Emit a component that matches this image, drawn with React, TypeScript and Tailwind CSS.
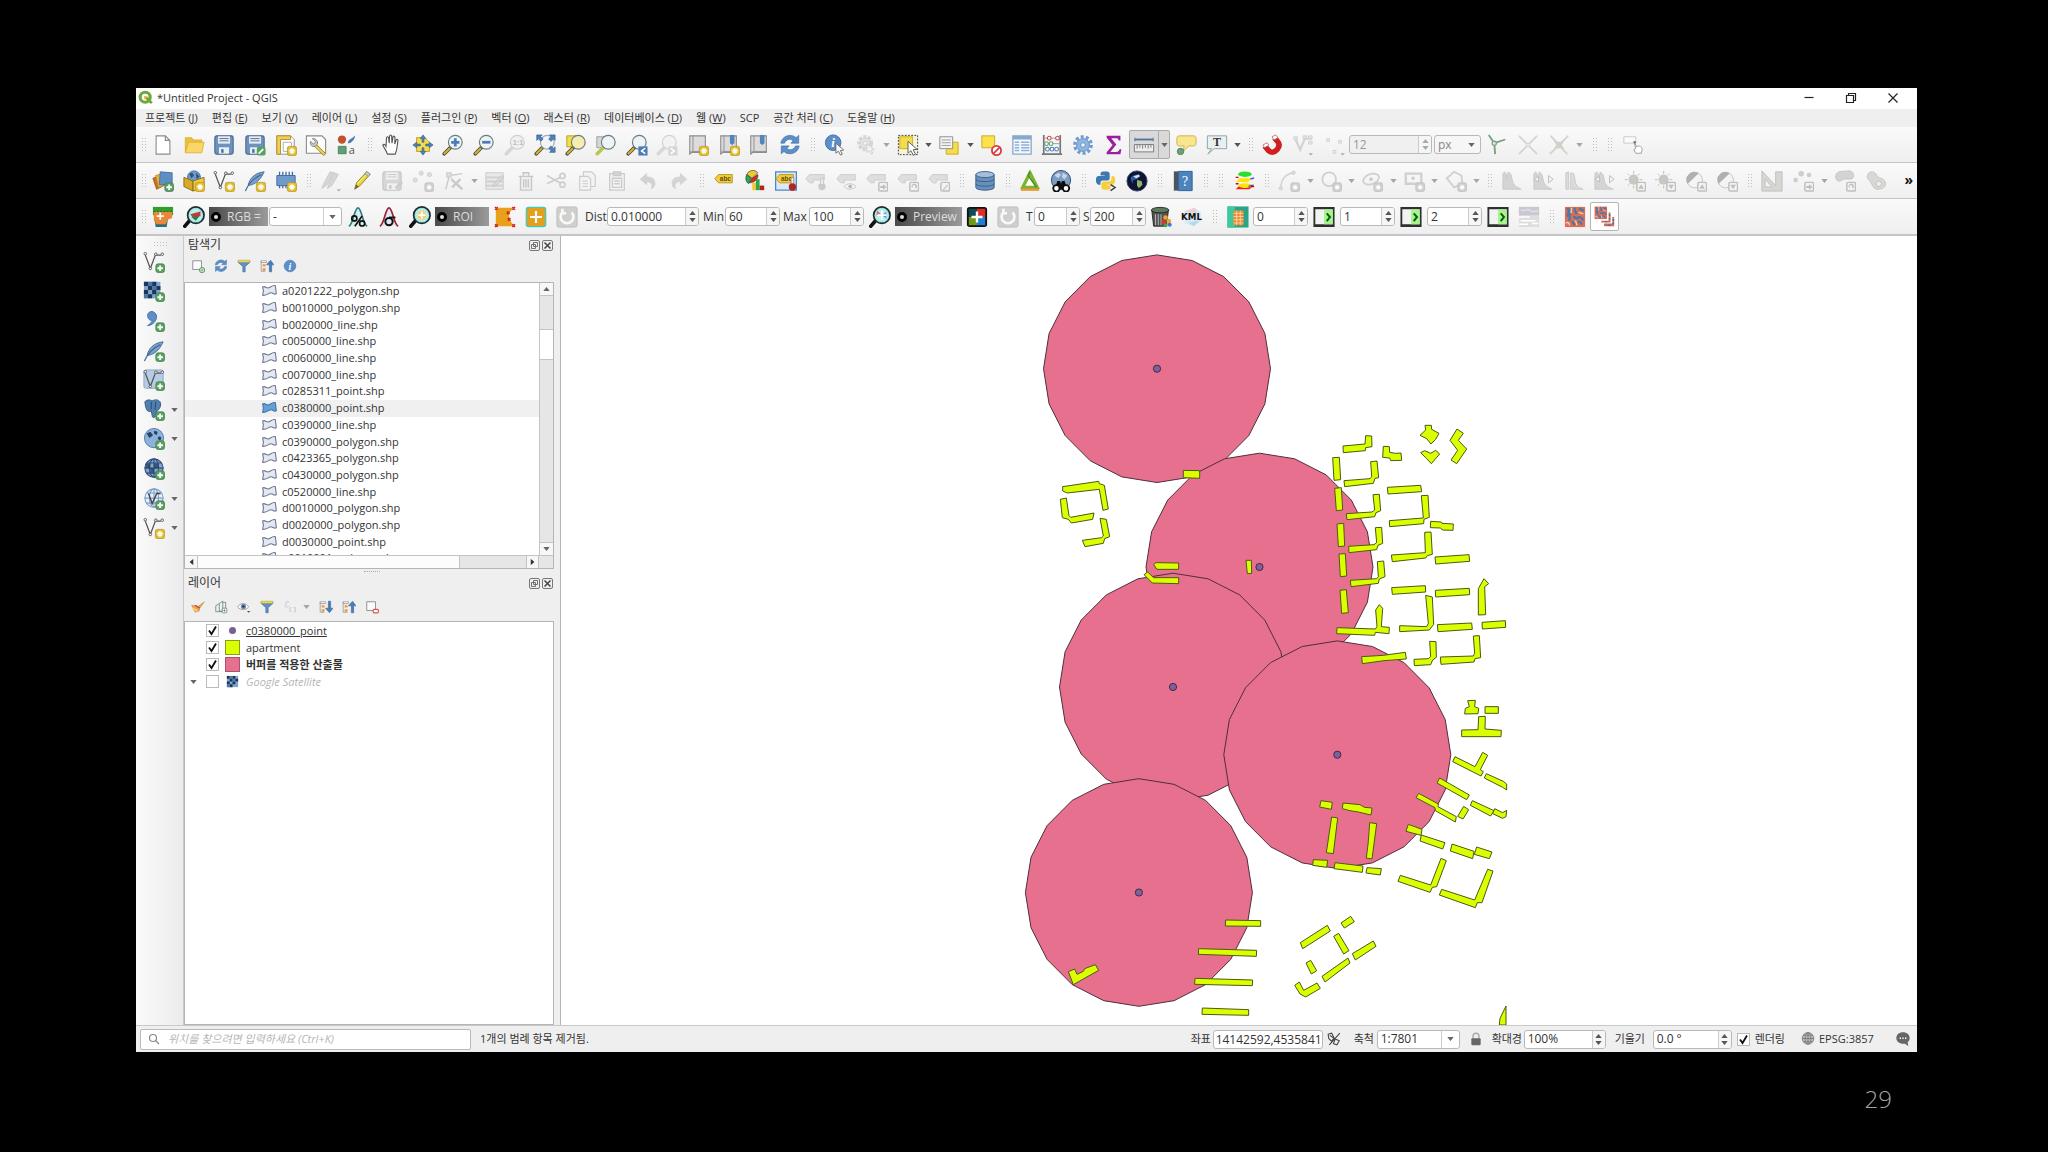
import { useState } from "react";
import type { ReactNode } from "react";
import clsx from "clsx";

/* ---------- badges shared by several icons ---------- */

const plusBadge = (
  <g>
    <rect x="14" y="14" width="9.5" height="9.5" rx="2.5" fill="#57a05f" stroke="#3f7f48" strokeWidth=".8" />
    <path d="M18.7 15.8v6M15.7 18.8h6" stroke="#fff" strokeWidth="2" />
  </g>
);

const newBadge = (
  <g>
    <rect x="13.5" y="13.5" width="10" height="10" rx="2" fill="#e3bd2c" stroke="#b8951b" strokeWidth=".8" />
    <path d="M18.5 15v7M15 18.5h7M16.2 16.2l4.6 4.6M20.8 16.2l-4.6 4.6" stroke="#fff" strokeWidth="1.3" />
  </g>
);

const greyBadge = (
  <g>
    <rect x="14" y="14" width="9.5" height="9.5" rx="2" fill="#d0d0d0" stroke="#bcbcbc" strokeWidth=".8" />
    <path d="M18.7 16v5.5M16 18.8h5.5M17 17l3.5 3.5M20.5 17L17 20.5" stroke="#fff" strokeWidth="1.1" />
  </g>
);

const lens = (stroke: string, handle: string, fill = "#eef3f4") => (
  <g>
    <path d="M9.5 14.5L2.5 21.5" stroke={handle === "#d4b12a" ? "#444" : handle} strokeWidth="4" strokeLinecap="round" />
    <path d="M8 16L2.8 21.2" stroke={handle} strokeWidth="2.4" strokeLinecap="round" />
    <circle cx="14.5" cy="9" r="7.5" fill={fill} stroke={stroke} strokeWidth="1.3" />
  </g>
);

const vNodes = (
  <g fill="none" stroke="#555" strokeWidth="1.4">
    <path d="M2.5 4.5L8 19l5.5-14.5h6" />
    <circle cx="2.5" cy="3" r="1.4" fill="#fff" strokeWidth="1" />
    <circle cx="8" cy="19" r="1.4" fill="#fff" strokeWidth="1" />
    <circle cx="14" cy="3.5" r="1.4" fill="#fff" strokeWidth="1" />
    <circle cx="21" cy="3.5" r="1.4" fill="#fff" strokeWidth="1" />
  </g>
);

const floppy = (body: string, line: string, label: string) => (
  <g>
    <rect x="2" y="2" width="20" height="20" rx="2" fill={body} stroke={line} strokeWidth="1.2" />
    <path d="M5.5 2.5h13v8h-13z" fill={label} />
    <path d="M7 5h10M7 7.5h10" stroke={line} />
    <path d="M6.5 14.5h11v7h-11z" fill={label} />
    <path d="M9 16.5h2.5v4H9z" fill={line} />
  </g>
);

const feather = (
  <g>
    <path d="M22 2C12 3 6 9 4.5 17c7-1 13-5 17.5-15z" fill="#7ba2cf" stroke="#456c96" />
    <path d="M1.5 23C4 17 10 9 19 5" fill="none" stroke="#456c96" strokeWidth="1.3" />
  </g>
);

const globe = (fill: string, line: string) => (
  <g fill="none" stroke={line} strokeWidth="1.2">
    <circle cx="12" cy="11" r="10" fill={fill} />
    <path d="M2 11h20M4 5.5h16M4 16.5h16" />
    <ellipse cx="12" cy="11" rx="5" ry="10" />
    <path d="M12 1v20" />
  </g>
);

const checker = (
  <g>
    <path d="M1 2h18v18H1z" fill="#7fa4cf" />
    <path d="M1 2h4.500v4.500H1zM10 2h4.500v4.500H10zM5.500 6.500H10V11H5.500zM14.500 6.500H19V11h-4.500zM1 11h4.500v4.500H1zM10 11h4.500v4.500H10zM5.500 15.500H10V20H5.500z" fill="#1e3554" />
    <path d="M5.500 2H10v4.500H5.500zM10 6.500h4.500V11H10zM1 15.500h4.500V20H1z" fill="#4a77aa" />
  </g>
);

const book = (
  <g>
    <path d="M3 2h17v18H5.500L3 22z" fill="#dcdcdc" stroke="#8d8d8d" strokeWidth="1.2" />
    <path d="M6.500 2v17M3 20l3-1h14" fill="none" stroke="#8d8d8d" />
  </g>
);

const tag = (fill: string, line: string, textColor: string) => (
  <g>
    <path d="M1 9.500l4-4.500h15v9H5z" fill={fill} stroke={line} />
    <text x="6.500" y="12" fontSize="7" fontWeight="700" fontFamily="Liberation Sans, sans-serif" fill={textColor}>abc</text>
  </g>
);

const tagGrey = <path d="M1 9.500l4-4.500h16v6H9v3H5z" fill="#dedede" stroke="#cbcbcb" />;

const histogram = (
  <path d="M2 21V4l2-2 2 3v5l2-8 3 3 2 9 3 4 6 3z" fill="#d4d4d2" stroke="#c4c4c2" strokeWidth=".8" />
);

const sun = (
  <g>
    <path d="M10.500 1v3M10.500 17v3M1 10.500h3M4 4l2 2M17 4l-2 2M4 17l2-2M17 10.500h3" stroke="#bcbcb6" />
    <circle cx="10.500" cy="10.500" r="5.500" fill="#c8c8c2" />
  </g>
);

const contrast = (
  <g>
    <circle cx="10.500" cy="11" r="8.500" fill="#f4f4f4" stroke="#c3c3c3" />
    <path d="M3 15A8.500 8.500 0 0115 3.500z" fill="#b0b0b0" />
  </g>
);

const levelBadge = (path: string) => (
  <g>
    <rect x="14" y="13.500" width="9.500" height="9.500" rx="1.500" fill="#f2f2f2" stroke="#bfbfbf" strokeWidth="1.600" />
    <path d={path} fill="#bfbfbf" />
  </g>
);

const magnifierDark = (inner: ReactNode) => (
  <g>
    <path d="M8 15L2 22" stroke="#111" strokeWidth="4" strokeLinecap="round" />
    <circle cx="14" cy="10" r="9" fill="#8fe0e0" stroke="#1c2b2b" strokeWidth="1.800" />
    <circle cx="14" cy="10" r="7" fill="#bdeee8" />
    {inner}
  </g>
);

const cycleArrows = (
  <g fill="#5b8fc7" stroke="#3c6ea5" strokeWidth=".7">
    <path d="M2 10C3 4 8 1.500 12 1.500c3 0 5 1 6.500 2.500L21.500 1.500V10H13l2.500-2.700C12 4.500 7.500 6 6 10z" />
    <path d="M22 13c-1 6-6 8.500-10 8.500-3 0-5-1-6.500-2.500L2.500 21.500V13H11l-2.500 2.700C12 18.500 16.500 17 18 13z" />
  </g>
);

const runBox = (
  <g>
    <path d="M1.500 2h21v20h-21z" fill="#f1f3f1" stroke="#2e302e" strokeWidth="2" />
    <path d="M1 1.500h22v2H1zM1 20h22v2.500H1z" fill="#2e302e" />
    <path d="M12 4h9.500v16H12z" fill="#a5f58c" />
    <path d="M15 8l3.500 4-3.500 4.500" fill="none" stroke="#0c5c10" strokeWidth="2.200" />
  </g>
);

const mosaic = (
  <g>
    <path d="M1 1h22v22H1z" fill="#dd6d54" />
    <path d="M3 4c3-2 4 1 2 3s2 3 3 1M12 2c-2 3 2 4 1 7M17 2c0 3 4 1 4 4M3 11c4-2 4 3 2 5M10 12c3-1 3 3 5 1s5 0 6 3M8 17c2 0 2 3 4 4M15 18c2-2 3 1 5 2" fill="none" stroke="#4a78a8" strokeWidth="2.600" />
    <path d="M8 2c1 2-1 3 0 6M16 7c2 0 3 2 5 1M2 19c2-2 4-1 4 2M12 16c2 1 1 3 2 5" fill="none" stroke="#ecd9bd" strokeWidth="1.300" />
  </g>
);

const treeBars = (
  <g>
    <path d="M2 3v18h7" fill="none" stroke="#777" />
    <path d="M2 3h9v3H2z" fill="#fff" stroke="#777" />
    <path d="M4.500 9h5v4h-5zM4.500 16h5v4h-5z" fill="#ea9a3e" />
  </g>
);

const filePath =
  "M2.500 6c3-2 5 1.500 8 1.500s6-5 11-3.500l1.500 12c-3 2.500-5-1.500-8-1.500-3.500 0-4.500 4.500-12.500 4 1.500-4.500 1.500-8.500 0-12.500z";

const icons: Record<string, ReactNode> = {
  qgis: (
    <g>
      <circle cx="11.500" cy="11.500" r="8" fill="none" stroke="#6fa83a" strokeWidth="5" />
      <path d="M13 12l9 9" stroke="#6fa83a" strokeWidth="4.500" />
      <path d="M9.500 9.500l6 1-5 5z" fill="#eaa93c" />
    </g>
  ),
  newFile: <path d="M4.500 2h10l5 5v15h-15zM14.500 2v5h5" fill="#fff" stroke="#8a8a8a" strokeWidth="1.200" />,
  open: (
    <g stroke="#dcae2b" strokeWidth=".9">
      <path d="M2.500 20V4h7l2 2.500h9V11" fill="#edbf3f" />
      <path d="M2.500 20.500L6 9h17l-2.500 11.500z" fill="#f8d668" />
    </g>
  ),
  save: floppy("#6d92bd", "#476a93", "#e9eef4"),
  saveAs: (
    <g>
      {floppy("#6d92bd", "#476a93", "#e9eef4")}
      <rect x="14" y="14" width="9.500" height="9.500" rx="2" fill="#57a05f" />
      <path d="M16 21.500l5-5" stroke="#fff" strokeWidth="2" />
    </g>
  ),
  newLayout: (
    <g>
      <path d="M2 2h15l4 4v16H2z" fill="#fff" stroke="#8a8a8a" />
      <path d="M2 2h15v4H6v16H2z" fill="#efcf55" stroke="#b58f20" />
      <path d="M9 9h9v10H9z" fill="#fff" stroke="#aaa" />
      {newBadge}
    </g>
  ),
  layouts: (
    <g>
      <path d="M1.500 2h17l4 4v15h-21z" fill="#fdfdfd" stroke="#8a8a8a" strokeWidth="1.200" />
      <path d="M12 13l8.500 8.500" stroke="#9a8128" strokeWidth="3.600" strokeLinecap="round" />
      <path d="M12 13l8.500 8.500" stroke="#ecd05a" strokeWidth="2.200" strokeLinecap="round" />
      <path d="M8 5l3.500 3.500L9.500 11 6 8c-1 4 2 6.500 5 5.500l2.500-2.500C14.500 8 12 4.500 8 5z" fill="#c9c9c9" stroke="#777" strokeWidth=".9" />
    </g>
  ),
  styles: (
    <g>
      <circle cx="6.500" cy="6" r="4.500" fill="#c4502c" />
      <path d="M2.500 13.500h8.500v8H2.500z" fill="#5f9f76" stroke="#47805b" />
      <path d="M13 10c0-4 3-4 8-8.500-1 5-4 8.500-8 8.500z" fill="#4c7db5" />
      <text x="14" y="22" fontSize="12" fontFamily="Open Sans, sans-serif" fill="#555">a</text>
    </g>
  ),
  hand: (
    <path
      d="M7 22c-1-4-4-7-5-10 1-1.500 2.500-.5 3.500 1.500L6 4.500c0-2 2-2 2.300 0L9 10l.3-7.500c.2-1.800 2.200-1.800 2.300 0L12 10l1-6.500c.4-1.700 2.200-1.400 2.200.3L15 11l1.500-4.500c.6-1.400 2.200-.9 2 .7C17.500 13 18 16 15.500 22z"
      fill="#fff" stroke="#555" strokeWidth="1.200"
    />
  ),
  panSelection: (
    <g>
      <path d="M5 4h9l5 5v10H5z" fill="#f5dc48" stroke="#b59b22" />
      <path d="M12 1l3 4h-2v4h-2V5H9zM12 23l3-4h-2v-4h-2v4H9zM1 12l4-3v2h4v2H5v2zM23 12l-4-3v2h-4v2h4v2z" fill="#4f82bb" stroke="#33618f" strokeWidth=".7" />
    </g>
  ),
  zoomIn: <g>{lens("#6b7b86", "#d4b12a")}<path d="M14.500 4.500v9M10 9h9" stroke="#4a7db5" strokeWidth="3" /></g>,
  zoomOut: <g>{lens("#6b7b86", "#d4b12a")}<path d="M10 9h9" stroke="#4a7db5" strokeWidth="3" /></g>,
  zoomNative: (
    <g>
      {lens("#cfcfcf", "#d6d6d6", "#f0f0f0")}
      <text x="9.500" y="12" fontSize="8" fontWeight="700" fontFamily="Liberation Sans, sans-serif" fill="#bdbdbd">1:1</text>
    </g>
  ),
  zoomFull: (
    <g>
      {lens("#aaa", "#d4b12a", "#f2f5f8")}
      <path d="M3 1h6L7.300 2.700 10 5.400 7.400 8 4.700 5.300 3 7zM23 1v6l-1.700-1.700L18.600 8 16 5.400l2.700-2.700L17 1zM23 20h-6l1.700-1.700L16 15.600l2.600-2.600 2.700 2.700L23 14z" fill="#4f82bb" stroke="#2d5a8a" strokeWidth=".7" />
    </g>
  ),
  zoomSelection: <g><path d="M2 2h12v12H2z" fill="#f5dc48" stroke="#b59b22" />{lens("#6b7b86", "#d4b12a", "#f4ecb0")}</g>,
  zoomLayer: <g><path d="M2 3h12v12H2z" fill="#d8d8d8" stroke="#999" />{lens("#6b7b86", "#b9c94a")}</g>,
  zoomLast: (
    <g>
      {lens("#6b7b86", "#d4b12a")}
      <path d="M13.500 13.500h10v10h-10z" fill="#4a7db5" />
      <path d="M21 15.500l-4 3 4 3" fill="none" stroke="#fff" strokeWidth="1.600" />
    </g>
  ),
  zoomNext: (
    <g>
      {lens("#d2d2d2", "#d8d8d8", "#f3f3f3")}
      <path d="M13.500 13.500h10v10h-10z" fill="#d6d6d6" />
      <path d="M16 15.500l4 3-4 3" fill="none" stroke="#fff" strokeWidth="1.600" />
    </g>
  ),
  bookNew: <g>{book}{newBadge}</g>,
  bookmarkNew: <g>{book}<path d="M13 1h5v9l-2.500 2L13 10z" fill="#5385bd" />{newBadge}</g>,
  bookmark: <g>{book}<path d="M13 1h5v9l-2.500 2L13 10z" fill="#5385bd" /></g>,
  refresh: cycleArrows,
  identify: (
    <g>
      <circle cx="10" cy="9.500" r="8.500" fill="#5c8fc8" stroke="#3f6ea3" />
      <text x="7.800" y="14.500" fontSize="14" fontStyle="italic" fontWeight="700" fontFamily="Liberation Serif, serif" fill="#fff">i</text>
      <path d="M13 10v11l2.700-2.300L18 23l2-1-2.200-4 3.700-.5z" fill="#fff" stroke="#666" />
    </g>
  ),
  gearGrey: (
    <g>
      <circle cx="11" cy="10" r="7" fill="none" stroke="#d6d6d6" strokeWidth="3.500" strokeDasharray="3.500 1.500" />
      <circle cx="11" cy="10" r="5.500" fill="#e4e4e4" stroke="#cdcdcd" />
      <circle cx="11" cy="10" r="2.200" fill="#f6f6f6" stroke="#cdcdcd" />
      <path d="M13 11v9l2.500-2 2 4 2-1-2-3.500 3.500-.5z" fill="#f5f5f5" stroke="#cdcdcd" />
    </g>
  ),
  select: (
    <g>
      <path d="M1.500 1.500h21v21h-21z" fill="#f5f3dc" stroke="#333" strokeDasharray="2 1.500" />
      <path d="M3 3h14v13H3z" fill="#f5dc48" stroke="#c9ab22" />
      <path d="M12 8v13l3.200-2.800 2.600 5 2.400-1.200-2.600-4.800 4.400-.4z" fill="#fff" stroke="#555" />
    </g>
  ),
  selectForm: (
    <g>
      <path d="M9 9h13v13H9z" fill="#f5dc48" stroke="#c9a822" />
      <path d="M2 3h14v13H2z" fill="#f2f4f6" stroke="#888" />
      <path d="M4 6.500h10M4 9.500h10M4 12.500h10" stroke="#999" />
    </g>
  ),
  deselect: (
    <g>
      <path d="M2 2h14v13H2z" fill="#fbe24c" stroke="#c9a822" />
      <circle cx="18" cy="18" r="5" fill="#fff" stroke="#d93d3d" strokeWidth="2" />
      <path d="M14.500 21.500l7-7" stroke="#d93d3d" strokeWidth="2" />
    </g>
  ),
  table: (
    <g>
      <path d="M2 2h20v20H2z" fill="#f4f8fc" stroke="#86a9cd" strokeWidth="1.400" />
      <path d="M2 2h20v4H2z" fill="#86a9cd" />
      <path d="M4 9h5M4 12h5M4 15h5M4 18h5M11 9h9M11 12h9M11 15h9M11 18h9" stroke="#8fb0d3" strokeWidth="1.600" />
    </g>
  ),
  abacus: (
    <g>
      <path d="M3 1v21M21 1v21M1 22h22" stroke="#777" strokeWidth="1.800" />
      <path d="M3 4.500h18M3 10.500h18M3 16.500h18" stroke="#999" />
      <g strokeWidth="1.200" fill="#fff">
        <g stroke="#c74b4b"><circle cx="9" cy="4.500" r="2" /><circle cx="18" cy="4.500" r="2" /></g>
        <g stroke="#5aa16b"><circle cx="6" cy="10.500" r="2" /><circle cx="11" cy="10.500" r="2" /></g>
        <g stroke="#4f82bb"><circle cx="7" cy="16.500" r="2" /><circle cx="12" cy="16.500" r="2" /><circle cx="17" cy="16.500" r="2" /></g>
      </g>
    </g>
  ),
  gear: (
    <g>
      <circle cx="12" cy="12" r="9" fill="none" stroke="#6f9bd0" strokeWidth="3.500" strokeDasharray="3.300 2.355" />
      <circle cx="12" cy="12" r="7" fill="#8fb5e2" stroke="#5f8dc4" />
      <circle cx="12" cy="12" r="2.500" fill="#f6f6f6" stroke="#5f8dc4" />
    </g>
  ),
  sigma: <path d="M4 2h15v5h-2c0-2-1-2.500-3-2.500H9l5.500 7L8 19.500h6.500c2 0 3-1 3.500-3h2L19 22H4v-2l6.500-8L4 4z" fill="#9a1f9c" />,
  measure: (
    <g>
      <path d="M2 6h20" stroke="#4f739c" strokeWidth="2" />
      <path d="M2 4v4M22 4v4" stroke="#4f739c" />
      <path d="M1.500 11.500h21v8h-21z" fill="#ededed" stroke="#777" />
      <path d="M4.500 12v4M7.500 12v3M10.500 12v4M13.500 12v3M16.500 12v4M19.500 12v3" stroke="#777" />
    </g>
  ),
  mapTip: (
    <g>
      <path d="M5 2h15c2 0 3 1 3 3v5c0 2-1 3-3 3h-5l-6 6 1-6H5c-2 0-3-1-3-3V5c0-2 1-3 3-3z" fill="#f8e58c" stroke="#cbb04c" />
      <circle cx="6" cy="19" r="3.500" fill="#6f9f7a" stroke="#51805d" />
    </g>
  ),
  textNote: (
    <g>
      <path d="M1.500 2h21v14H9l-7 6 4-6H1.500z" fill="#e9f0f0" stroke="#8ba1a1" />
      <text x="7.500" y="13.500" fontSize="13" fontWeight="700" fontFamily="Liberation Serif, serif" fill="#333">T</text>
    </g>
  ),
  magnet: (
    <g>
      <path d="M3 13l4 5c3 3 7 2 9.500-1s3-6.500 0-9.500L13.500 4" fill="none" stroke="#cf1f1f" strokeWidth="6" />
      <path d="M1 12l4.500-2.500L7.500 12 3 15zM11 3l4-2 2.500 3L13 6.500z" fill="#fff" stroke="#b55" strokeWidth=".8" />
    </g>
  ),
  snapV: (
    <g fill="none" stroke="#d3d3d3">
      <path d="M3 4l6 13 5-12h8" strokeWidth="2.500" />
      <path d="M2 3h4v3H2zM12 2h4v3h-4zM18 2h4v3h-4zM18 8h4v3h-4z" fill="#e4e4e4" />
      <path d="M18 21h5l-2.500 2.500z" fill="#aaa" stroke="none" />
    </g>
  ),
  snapPoints: (
    <g>
      <path d="M4 5h3v3H4zM17 7h3v3h-3zM11 18h3v3h-3z" fill="#f1f1f1" stroke="#cdcdcd" />
      <path d="M19 21h5l-2.500 2.500z" fill="#aaa" />
    </g>
  ),
  topo: (
    <g fill="none" stroke="#76a27d" strokeWidth="2">
      <path d="M3 1l6 9 12-4M9 10l1 12" />
      <circle cx="9" cy="10" r="2.300" fill="#dfeae0" strokeWidth="1.300" />
    </g>
  ),
  cross: (
    <g stroke="#d4d4d1" strokeWidth="2" fill="none">
      <path d="M2 2l20 20M22 2L2 22" />
      <circle cx="12" cy="12" r="2" fill="#eee" strokeWidth="1" />
    </g>
  ),
  trace: (
    <g>
      <path d="M3 2l18 20M22 2L2 22" stroke="#d0d2cc" strokeWidth="1.800" />
      <path d="M6 7c4 2 8 2 12 0l-3 5 3 5c-4-2-8-2-12 0l3-5z" fill="#cfd2ca" />
    </g>
  ),
  shapeDigit: (
    <g>
      <path d="M2 3h13v7H2z" fill="#fafafa" stroke="#c7c7c7" />
      <path d="M13 8l3 6c3-2 6 0 6 3l-1 4h-6l-2-4 2-1z" fill="#fff" stroke="#999" />
      <circle cx="14" cy="9" r="1.300" fill="#777" />
    </g>
  ),
  dataSource: (
    <g strokeWidth=".9">
      <path d="M1 9l10-4 4 11-10 5z" fill="#cf6a2f" stroke="#a34f1f" />
      <path d="M4 6l11-3 3 12-11 4z" fill="#e5b33b" stroke="#b88b23" />
      <path d="M9 2l13 1v13H8z" fill="#5d8fc4" stroke="#3e6d9f" />
      {plusBadge}
    </g>
  ),
  newGeopackage: (
    <g>
      <circle cx="12" cy="8" r="7" fill="#6f9aca" stroke="#3e6d9f" />
      <path d="M7 4l3-1 2 3-3 3zM14 3l4 4-3 3z" fill="#2f5176" />
      <path d="M1 8l10 4v11L1 18z" fill="#d9a92a" stroke="#8a6a15" />
      <path d="M11 12l12-4v10l-12 5z" fill="#f0cd4a" stroke="#8a6a15" />
      {newBadge}
    </g>
  ),
  newShape: <g>{vNodes}{newBadge}</g>,
  newSpatialite: <g>{feather}{newBadge}</g>,
  newMemory: (
    <g>
      <path d="M5 2v18M8.500 2v18M12 2v18M15.500 2v18M19 2v18" stroke="#3f6a9c" strokeWidth="1.400" />
      <path d="M2 6h20v11H2z" fill="#6f9acb" stroke="#3f6a9c" />
      {newBadge}
    </g>
  ),
  editsGrey: (
    <g>
      <path d="M2 20l2-5L11 2l4 1-7 13zM8 20l2-5 6-12 4 2-7 12z" fill="#d6d6d6" stroke="#c9c9c9" />
      <path d="M18 21h5l-2.500 2.500z" fill="#b0b0b0" />
    </g>
  ),
  pencil: (
    <g>
      <path d="M4 21l2-7L17 2l4 2.500L10 17z" fill="#e6d33e" stroke="#8f8526" />
      <path d="M7 15L18 3.500" stroke="#fff7a0" />
      <path d="M15 4l4 3 2-2.500L17 1.500z" fill="#c9c9c9" stroke="#888" strokeWidth=".8" />
      <path d="M4 21l1.500-5 3 2z" fill="#7a5b3a" />
    </g>
  ),
  saveGrey: <g>{floppy("#d6d6d6", "#c6c6c6", "#f0f0f0")}<path d="M16 20l7-7" stroke="#cdcdcd" strokeWidth="3" /></g>,
  addPoint: (
    <g>
      <g fill="#e0e0e0" stroke="#cacaca"><circle cx="3.500" cy="11" r="2.200" /><circle cx="10" cy="3.500" r="2.200" /><circle cx="19" cy="5" r="2.200" /></g>
      {greyBadge}
    </g>
  ),
  vertexTool: (
    <g stroke="#cacaca" fill="none">
      <path d="M3 21L7 6l14-2" strokeWidth="1.500" />
      <path d="M9 10l12 11M19 10L10 19" strokeWidth="2.600" />
      <path d="M4 3h5v5H4z" fill="#ddd" />
    </g>
  ),
  editForm: (
    <g>
      <path d="M2 3h19v18H2z" fill="#e8e8e6" stroke="#cacaca" />
      <path d="M2 8h19M2 12.500h19M2 17h19" stroke="#cfcfcd" strokeWidth="2" />
      <path d="M9 17l10-11 2.500 2L12 18z" fill="#d9d9d7" stroke="#c3c3c3" />
    </g>
  ),
  trash: (
    <g fill="none" stroke="#c6c6c6" strokeWidth="1.500">
      <path d="M4 7h16M9 6V3h6v3M6 7v15h12V7" fill="#efefef" />
      <path d="M9.500 10v9M12 10v9M14.500 10v9" />
    </g>
  ),
  cut: (
    <g fill="none" stroke="#cdcdcd" strokeWidth="1.800">
      <path d="M2 6l14 8M2 15l15-7" />
      <circle cx="19" cy="6.500" r="2.800" /><circle cx="19" cy="16" r="2.800" />
    </g>
  ),
  copy: <g fill="#f3f3f3" stroke="#cbcbcb" strokeWidth="1.200"><path d="M8 2h9l4 4v12H8z" /><path d="M4 7h9l3 3v12H4z" /><path d="M7 12h6M7 15h6M7 18h6" /></g>,
  paste: <g fill="#f3f3f3" stroke="#cbcbcb" strokeWidth="1.400"><path d="M4 4h16v18H4z" /><path d="M8 2h8v4H8z" fill="#d4d4d4" /><path d="M7 9h10v10H7zM9 12h6M9 15h6" /></g>,
  undo: <path d="M3 10l8-7v4c7 0 9 4 9 8 0 3-2 5-5 6 2-5 0-8-4-8v4z" fill="#d2d2d2" />,
  redo: <path d="M21 10l-8-7v4c-7 0-9 4-9 8 0 3 2 5 5 6-2-5 0-8 4-8v4z" fill="#d4d4d4" />,
  label: <g transform="translate(1 0)">{tag("#f2cf3a", "#b8921c", "#5c4a10")}</g>,
  diagram: (
    <g>
      <path d="M9 9L3 5a7 7 0 0112-2z" fill="#f2c92f" stroke="#222" strokeWidth=".6" />
      <path d="M8 9L3 5c-2 4-1 8 2 10z" fill="#2ea84a" stroke="#222" strokeWidth=".6" />
      <path d="M9 9l6-4c1 4-3 9-9 9z" fill="#d42a2a" stroke="#222" strokeWidth=".6" />
      <path d="M9 14h4v8H9z" fill="#f2c92f" /><path d="M13 10h4v12h-4z" fill="#2ea84a" /><path d="M17 17h5v5h-5z" fill="#b52323" />
    </g>
  ),
  labelPin: (
    <g>
      <path d="M.7 2h22.600v20H.7z" fill="#dceaf8" stroke="#4f86c4" strokeWidth="1.400" />
      {tag("#f2cf3a", "#b8921c", "#5c4a10")}
      <path d="M17.500 8h3v8h-3z" fill="#eee" stroke="#888" />
      <circle cx="19" cy="18.500" r="4" fill="#b32525" />
    </g>
  ),
  labelGrey1: <g>{tagGrey}<circle cx="18.500" cy="18" r="4" fill="#cbcbcb" /><path d="M17 9h3v7h-3z" fill="#eee" stroke="#c6c6c6" /></g>,
  labelGrey2: <g>{tagGrey}<path d="M9 18c3-4 9-4 13 0-4 4-10 4-13 0z" fill="#f3f3f3" stroke="#c3c3c3" /><circle cx="15.500" cy="18" r="2" fill="#b5b5b5" /></g>,
  labelGrey3: <g>{tagGrey}{levelBadge("M15.500 17.500h3v-2l4 3-4 3v-2h-3z")}</g>,
  labelGrey4: <g>{tagGrey}{levelBadge("M16 19a3 3 0 115 1l-1.500-1a1.500 1.500 0 10-2 0z")}</g>,
  labelGrey5: <g>{tagGrey}{levelBadge("M16 21.500l5-5.500 1 1-5 5z")}</g>,
  database: (
    <g stroke="#3a5c82">
      <path d="M2 5v14c0 4 20 4 20 0V5z" fill="#6690be" />
      <path d="M2 10c0 3.500 20 3.500 20 0M2 15c0 3.500 20 3.500 20 0" fill="none" />
      <ellipse cx="12" cy="5" rx="10" ry="3.300" fill="#a3bfdd" />
    </g>
  ),
  grass: (
    <g>
      <path d="M12 3L4 19h16z" fill="#fff" stroke="#7cb52c" strokeWidth="3.500" />
      <path d="M12 2l-2 4 9 13" fill="none" stroke="#4a8a1c" strokeWidth="1.500" />
      <path d="M2 21.500h20" stroke="#f0963c" strokeWidth="2.500" />
    </g>
  ),
  osm: (
    <g>
      <circle cx="12" cy="11" r="10.500" fill="#7d9dc4" stroke="#2c4566" />
      <path d="M5 6l4-3 3 2-3 4zM14 3l5 3-3 4-3-2z" fill="#c6d6ea" />
      <path d="M5 21l3-9h3l1 3 1-3h3l3 9z" fill="#0e0e0e" />
      <circle cx="7" cy="20" r="3.500" fill="#fff" stroke="#0e0e0e" strokeWidth="2" /><circle cx="17.500" cy="20" r="3.500" fill="#fff" stroke="#0e0e0e" strokeWidth="2" />
    </g>
  ),
  python: (
    <g>
      <path d="M9 1.500h4c2 0 3 1 3 3V9c0 1.500-1 2.500-2.500 2.500h-5C7 11.500 6 12.500 6 14v2H4c-2 0-3-2-3-5s1-4.500 3-4.500h6.500V6H6V4.500c0-2 1-3 3-3z" fill="#3e78b0" />
      <path d="M18 6.500h1c2 0 3 1.500 3 4.500s-1 5-3 5h-6v1h4v1.500c0 2-1 3-3 3H10c-2 0-3-1-3-3V15c0-1.500 1-2.500 2.500-2.500h5c2 0 3.500-1 3.500-3z" fill="#f5cf3c" />
      <path d="M17 16l5 3-5 3.500" fill="none" stroke="#333" strokeWidth="1.400" />
    </g>
  ),
  earth: (
    <g>
      <circle cx="12" cy="12" r="11" fill="#0e1533" stroke="#33406a" />
      <path d="M5 9c2-4 8-5 11-3l-4 4-4 1-1 4z" fill="#2c5da8" />
      <path d="M12 11l5 1 1 4-4 4-2-3z" fill="#8fb46a" /><path d="M8 7l6-2 1 2-4 2z" fill="#d6e2ef" />
    </g>
  ),
  help: (
    <g>
      <path d="M2 1.500h5v21H2z" fill="#4a5560" /><path d="M7 1.500h15v21H7z" fill="#4d83bd" stroke="#2f5b8d" />
      <text x="11" y="17" fontSize="15" fontFamily="Liberation Serif, serif" fill="#fff">?</text>
    </g>
  ),
  stack: (
    <g>
      <path d="M3 21l5-5h15l-5 5z" fill="#f02020" />
      <ellipse cx="13" cy="17" rx="7" ry="2.500" fill="#ffe500" /><path d="M4 12l3-3h13l-3 4H4z" fill="#ffe500" />
      <path d="M19 9l4-1v1.500l-4 1zM17 17l5-1v1.500l-5 1z" fill="#2f57d9" /><ellipse cx="13" cy="4.500" rx="7.500" ry="3" fill="#27e02b" />
      <path d="M3 8h3M3 15h3M20 18h3" stroke="#c00" strokeWidth="1.500" />
    </g>
  ),
  curve: <g><path d="M3 21C3 10 8 4 18 3" fill="none" stroke="#d0d0d0" strokeWidth="1.500" /><circle cx="3" cy="20" r="1.800" fill="#ddd" stroke="#ccc" /><circle cx="17" cy="3" r="1.800" fill="#ddd" stroke="#ccc" />{greyBadge}</g>,
  circleDraw: <g><circle cx="10" cy="10" r="7.500" fill="none" stroke="#d0d0d0" strokeWidth="2" />{greyBadge}</g>,
  ellipseDraw: <g><ellipse cx="11" cy="10" rx="9" ry="5.500" fill="none" stroke="#d0d0d0" strokeWidth="2" transform="rotate(-20 11 10)" /><circle cx="11" cy="10" r="2" fill="#ccc" />{greyBadge}</g>,
  rectDraw: <g><path d="M3 4h17v11H3z" fill="none" stroke="#d0d0d0" strokeWidth="2.500" /><circle cx="11" cy="9" r="2" fill="#ccc" />{greyBadge}</g>,
  polyDraw: <g><path d="M2 9l8-7 8 4 1 9-9 4z" fill="none" stroke="#d0d0d0" strokeWidth="2" />{greyBadge}</g>,
  hist1: histogram,
  hist2: <g>{histogram}<path d="M18 6l5 4-5 4zM2 10l5-3v6z" fill="#f2f2f2" stroke="#bbb" /></g>,
  hist3: <path d="M3 21V3l3-1v19zM8 21V3l4 1 2 11 3 4 5 2z" fill="#dadad8" stroke="#c6c6c4" strokeWidth=".8" />,
  sunUp: <g>{sun}{levelBadge("M18.700 15.500l3 5h-6z")}</g>,
  sunDown: <g>{sun}{levelBadge("M18.700 21l3-5h-6z")}</g>,
  contrastUp: <g>{contrast}{levelBadge("M18.700 15.500l3 5h-6z")}</g>,
  contrastDown: <g>{contrast}{levelBadge("M18.700 21l3-5h-6z")}</g>,
  setSquare: <path fillRule="evenodd" d="M1 1l15 16V2h7v21H1zm3.500 9v8.500H12z" fill="#d6d6d4" stroke="#bfbfbd" />,
  moveFeature: <g><circle cx="4" cy="11" r="2.500" fill="#cdcdcd" /><circle cx="10" cy="4" r="3" fill="#cdcdcd" /><circle cx="18.500" cy="5.500" r="2.500" fill="#cdcdcd" />{levelBadge("M15.500 17.500h3v-2l4 3-4 3v-2h-3z")}</g>,
  rotateFeature: <g><path d="M2 6c1-6 9-4 13-5s8 3 6 7-8 0-12 3S1 11 2 6z" fill="#d3d3d1" stroke="#c4c4c2" />{levelBadge("M16 19a3 3 0 115 1l-1.500-1a1.500 1.500 0 10-2 0z")}</g>,
  simplify: <g><path d="M3 5c3-5 8-3 10 1s7 2 9 7-3 8-8 8-6-5-8-8-5-4-3-8z" fill="#d7d9d4" stroke="#c3c5c0" /><circle cx="15" cy="15" r="3" fill="#eee" stroke="#bfc1bc" /></g>,
  bandset: (
    <g>
      <path d="M1 1h22v9H1z" fill="#2f9e2b" /><path d="M2 10h16l-2 13H4z" fill="#2d6f74" />
      <path d="M2 6h20v7l-5 2-2 5H5l-3-4z" fill="#e8883a" /><path d="M2 6h21" stroke="#176016" strokeDasharray="2 1.500" />
      <path d="M9 7v8M5 11h8" stroke="#fff" strokeWidth="1.800" />
    </g>
  ),
  zoomImage: magnifierDark(<g><path d="M8 9l11-3v5l-8 2z" fill="#c03a3a" /><path d="M9 12l9-1-4 5z" fill="#2f7a4a" /></g>),
  stretchPct: (
    <g fill="none">
      <path d="M2 22C7 20 8 2 12 2s5 18 10 20" fill="#d7efe9" stroke="#2c7f8c" strokeWidth="1.800" />
      <circle cx="8" cy="13.500" r="2.800" stroke="#111" strokeWidth="1.800" /><circle cx="16.500" cy="19" r="2.800" stroke="#111" strokeWidth="1.800" /><path d="M16.500 11l-8 11" stroke="#111" strokeWidth="1.800" />
    </g>
  ),
  stretchSigma: (
    <g fill="none">
      <path d="M2 22C7 20 8 2 12 2s5 18 10 20" fill="#dcebfa" stroke="#a11f27" strokeWidth="1.800" />
      <path d="M19 12.500h-7" stroke="#111" strokeWidth="2" /><circle cx="12" cy="17" r="4" stroke="#111" strokeWidth="2.200" />
    </g>
  ),
  zoomRoi: magnifierDark(<g><circle cx="14" cy="10" r="5" fill="#f5ce74" /><path d="M14 6v8M10 10h8" stroke="#fff" strokeWidth="2" /></g>),
  roiPolygon: (
    <g>
      <path d="M2 2h20l-6 6 1 7 5 7H2z" fill="#e9a11b" />
      <path d="M1 1l3 3M4 1L1 4M20 1l3 3M23 1l-3 3M20 20l3 3M23 20l-3 3M1 20l3 3M4 20l-3 3M14 6l3 3M17 6l-3 3M15 13l3 3M18 13l-3 3" stroke="#d21f1f" strokeWidth="1.500" />
    </g>
  ),
  roiAdd: <g><rect x="1.500" y="1.500" width="21" height="21" rx="2.500" fill="#e3a01c" stroke="#41c9b9" strokeWidth="1.500" /><path d="M12 5.500v13M5.500 12h13" stroke="#fff" strokeWidth="2.400" /></g>,
  redoRoi: <g><rect x="1" y="1" width="22" height="22" rx="2" fill="#cfcfcd" stroke="#bdbdbb" /><path d="M7 7a7 7 0 1010 0M7 3v5h4" fill="none" stroke="#fafafa" strokeWidth="2.800" /></g>,
  zoomPreview: magnifierDark(<g><path d="M9 5l5 5H8z" fill="#e06a6a" /><path d="M19 6l-5 4 5 4z" fill="#6a9ae0" /><path d="M14 5v10M9 10h10" stroke="#fff" strokeWidth="2" /></g>),
  previewAdd: (
    <g>
      <rect x="1" y="1" width="22" height="22" rx="3" fill="#111" />
      <path d="M3 3h9v9H3z" fill="#0e4a52" /><path d="M12 3h9v9h-9z" fill="#e02e25" /><path d="M3 12h9v9H3z" fill="#6f9a15" /><path d="M12 12h9v9h-9z" fill="#1d7fd4" />
      <path d="M12 6v12M6 12h12" stroke="#fff" strokeWidth="2.600" />
    </g>
  ),
  bin: (
    <g>
      <path d="M2 5h18l-2 17H4z" fill="#555" stroke="#222" /><path d="M6 9v12M9 9v12M12 9v12" stroke="#bbb" />
      <ellipse cx="11" cy="4.500" rx="9.500" ry="3" fill="#5d7a5d" stroke="#222" />
      <circle cx="17" cy="12.500" r="2.500" fill="#f2a52b" /><circle cx="20.500" cy="16.500" r="2.500" fill="#f2a52b" /><circle cx="15" cy="17.500" r="2.500" fill="#d33c2c" /><circle cx="17" cy="21" r="2.200" fill="#3aa852" /><circle cx="21.500" cy="20.500" r="2.200" fill="#3a76d4" />
    </g>
  ),
  kml: (
    <g>
      <path d="M3 6l12-4 7 5v10l-8 5-10-3z" fill="#d9eaf0" /><path d="M3 6l12-4 3 6z" fill="#f0cdd2" /><path d="M8 18l12-2-6 6z" fill="#b6d8ee" />
      <text x="0" y="15.500" fontSize="9.500" fontWeight="700" fontFamily="DejaVu Sans, sans-serif" fill="#111">KML</text>
    </g>
  ),
  classify: (
    <g>
      <path d="M.5.5h23v23H.5z" fill="#2aa487" /><path d="M.5.5h8v23h-8z" fill="#3cc9a0" />
      <path d="M7 5h11v16H7z" fill="#f08a2c" /><path d="M7 8h11M7 11.500h11M7 15h11M7 18.500h11M10.500 5v16M14.500 5v16" stroke="#fbe3c8" strokeWidth=".8" />
    </g>
  ),
  runBox,
  classGrey: (
    <g>
      <path d="M1 1h22v22H1z" fill="#dedede" /><path d="M1 1h22v9H1z" fill="#c8c8d0" />
      <path d="M1 12h12M3 16h16M1 20h10M15 19h7" stroke="#fff" strokeWidth="1.600" />
      <path d="M3 4c4 3 6-2 10 1s5-1 9 1" fill="none" stroke="#dcdce4" strokeWidth="2" />
    </g>
  ),
  mosaic,
  mosaicStack: (
    <g>
      <g transform="scale(.62)">{mosaic}</g>
      <path d="M16 7h2v11H8v-2h8zM20 12h2v10H11v-3h9z" fill="#cf6a55" />
      <path d="M16 10h2M16 14h2M20 15h2M20 19h2M12 17h2M15 21h3" stroke="#4a78a8" strokeWidth="1.500" />
    </g>
  ),
  addVector: <g>{vNodes}{plusBadge}</g>,
  addRaster: <g>{checker}{plusBadge}</g>,
  addCsv: <g><path d="M5 6c0-3 3-5 6-4s5 5 3 9-6 6-9 6c3-2 5-4 5-6-3 1-5-2-5-5z" fill="#5f8fc5" stroke="#3f6ea3" />{plusBadge}</g>,
  addSpatialite: <g>{feather}{plusBadge}</g>,
  addVirtual: <g><rect x="1" y="1" width="21" height="20" rx="2" fill="#b7cce4" stroke="#8aa7c8" />{vNodes}{plusBadge}</g>,
  addPostgis: (
    <g>
      <path d="M2 3c3-3 6-2 8-1 4-2 8-1 9 2s-1 8-4 9l-1 5c-1 3-4 3-4 0l-1-5c-4 2-6-1-7-10z" fill="#4f7fae" stroke="#2e567f" />
      <path d="M9 3v8M14 3l-1 9" stroke="#24486e" />{plusBadge}
    </g>
  ),
  addWms: <g><circle cx="12" cy="11" r="10.500" fill="#8fb2da" stroke="#4f79ab" /><path d="M4 6l4-2 3 4-4 3zM12 3l4 1-1 4-3-2zM17 9l3 1-1 4-3-2z" fill="#23436b" />{plusBadge}</g>,
  addWcs: <g>{globe("#7fa4cf", "#2f4f7a")}<path d="M3 6h5v5H3zM12 6h5v5h-5zM8 11h4v5H8z" fill="#1e3554" opacity=".7" />{plusBadge}</g>,
  addWfs: <g>{globe("#e6eef8", "#7c9fca")}<path d="M6 6l4 11 5-11h4" fill="none" stroke="#444" strokeWidth="1.500" />{plusBadge}</g>,
  addGps: <g>{vNodes}{newBadge}</g>,
  addSelected: <g><path d="M3 3h15v15H3z" fill="#fbfbfb" stroke="#777" strokeWidth="1.300" /><circle cx="19" cy="19" r="4.500" fill="#dcecdc" stroke="#4c8f55" strokeWidth="1.500" /><path d="M19 16.500v5M16.500 19h5" stroke="#4c8f55" /></g>,
  filter: <g><path d="M2 3h20v3l-8 7v9h-4v-9L2 6z" fill="#5f8fc5" stroke="#3f6590" /><path d="M2 2h20v3.500H2z" fill="#f1e15c" stroke="#b3a22c" strokeWidth=".8" /></g>,
  collapse: <g>{treeBars}<path d="M16 22V10h-5l7-8 6 8h-4v12z" fill="#4a7db5" stroke="#2d5a8a" strokeWidth=".8" /></g>,
  expand: <g>{treeBars}<path d="M16 2v12h-5l7 8 6-8h-4V2z" fill="#4a7db5" stroke="#2d5a8a" strokeWidth=".8" /></g>,
  info: <g><circle cx="12" cy="12" r="10" fill="#5c8fc8" stroke="#3f6ea3" /><text x="9.500" y="18" fontSize="17" fontStyle="italic" fontWeight="700" fontFamily="Liberation Serif, serif" fill="#fff">i</text></g>,
  brush: <g><path d="M23 3L12 11l3 3z" fill="#d9b83c" stroke="#b8962b" /><path d="M1 9l7 1 7 4-1 5-7 2z" fill="#eda25a" stroke="#d98a48" /><path d="M3 14l8 5" stroke="#f7d26a" strokeWidth="3" /><path d="M7 9l8 5" stroke="#c9483a" strokeWidth="2.500" /></g>,
  addGroup: <g fill="#eef2ee" stroke="#5f7d66" strokeWidth="1.300"><path d="M9 19V6l6-4v17z" /><path d="M3 20V10l6-4M3 20h11" fill="none" /><path d="M15 4h5v11" fill="none" /><rect x="14" y="14" width="8" height="8" rx="1.500" fill="#fff" /><path d="M18 16v4M16 18h4" /></g>,
  eye: <g><path d="M1 12c5-8 14-8 19 0-5 6-14 6-19 0z" fill="#fff" stroke="#999" strokeWidth="1.500" /><circle cx="11" cy="11" r="4.500" fill="#6f8fb5" /><circle cx="11" cy="11" r="2" fill="#24344a" /><path d="M17 19h6l-3 3z" fill="#555" /></g>,
  epsilon: <g fill="none" stroke="#c6c6c6" strokeWidth="1.600"><path d="M11 4C7 1 3 4 6 7c-5 2-2 7 4 4" /><path d="M14 13h-2v7h2M18 13h3v7h-3" /></g>,
  removeLayer: <g><path d="M3 3h15v15H3z" fill="#fbfbfb" stroke="#777" strokeWidth="1.300" /><rect x="14" y="16" width="9" height="6" rx="2" fill="#fff" stroke="#d9534f" strokeWidth="2" /></g>,
  polygonFile: <path d={filePath} fill="#e4e8f2" stroke="#69758c" strokeWidth="1.600" />,
  polygonFileOn: <path d={filePath} fill="#62a0d8" stroke="#44719f" strokeWidth="1.600" />,
  rasterLayer: <g transform="translate(2 1)">{checker}</g>,
  magnify: <g fill="none" stroke="#888" strokeWidth="2.400"><circle cx="10" cy="10" r="7" /><path d="M15 15l7 7" /></g>,
  extents: <g fill="none" stroke="#444" strokeWidth="1.800"><path d="M2 4l6-2 4 8-4 6-5-5zM22 2L4 22M14 12l7 3-4 7-6-2zM5 6l6 4" /></g>,
  lock: <g><path d="M7 11V7a5 5 0 0110 0v4" fill="none" stroke="#aaa" strokeWidth="2.500" /><rect x="4" y="10.500" width="16" height="12" rx="2" fill="#666" /></g>,
  crs: globe("#b9b9b9", "#6e6e6e"),
  messages: <g><path d="M12 2c6 0 10 3.500 10 8.500 0 3-1.500 5-3 6.500l1 6-5-4c-8 1-13-3-13-8.500C2 5.500 6 2 12 2z" fill="#666" /><path d="M7 11h2M11 11h2M15 11h2" stroke="#fff" strokeWidth="2.200" /></g>,
};

function Icon({ name, className = "size-[22px]" }: { name: string; className?: string }) {
  return (
    <svg viewBox="0 0 24 24" className={clsx("shrink-0", className)} aria-hidden="true">
      {icons[name]}
    </svg>
  );
}

function Grip() {
  return (
    <span className="flex w-[15px] shrink-0 justify-center">
      <span className="h-4 w-[6px] bg-[radial-gradient(#bdbdbd_1px,transparent_1px)] bg-[size:3px_3px]" />
    </span>
  );
}

function Caret({ className = "text-[#666]" }: { className?: string }) {
  return (
    <svg viewBox="0 0 8 5" className={clsx("h-[4px] w-[7px] shrink-0", className)} aria-hidden="true">
      <path d="M0 0h8L4 5z" fill="currentColor" />
    </svg>
  );
}

/* "v" in the list adds a drop-down arrow after the previous icon, "V" a dimmed one */
function ToolGroup({ items, className }: { items: string; className: string }) {
  return (
    <div className={clsx("flex shrink-0 items-center", className)}>
      {items.split(" ").map((item, index) =>
        item === "v" || item === "V" ? (
          <button key={index} type="button" aria-label="메뉴" className="flex h-6 w-[11px] shrink-0 items-center justify-center">
            <Caret className={item === "v" ? "text-[#555]" : "text-[#a5a5a5]"} />
          </button>
        ) : (
          <button key={index} type="button" aria-label={item} className="flex h-7 min-w-0 flex-1 items-center justify-center">
            <Icon name={item} />
          </button>
        ),
      )}
    </div>
  );
}

function SpinBox({
  label,
  value,
  className,
  disabled,
}: {
  label: string;
  value: string;
  className: string;
  disabled?: boolean;
}) {
  return (
    <span
      className={clsx(
        "flex h-[19px] shrink-0 overflow-hidden rounded-[3px] border border-[#b9b9b9]",
        disabled ? "bg-[#f0f0f0] text-[#999]" : "bg-white",
        className,
      )}
    >
      <input aria-label={label} defaultValue={value} disabled={disabled} className="w-0 min-w-0 flex-1 bg-transparent pl-[3px] outline-none" />
      <span className={clsx("flex w-[13px] flex-col items-center justify-center gap-[3px] border-l border-[#ccc] bg-[#f6f6f6]", disabled ? "text-[#aaa]" : "text-[#555]")}>
        <button type="button" aria-label={`${label} +`} className="rotate-180">
          <Caret className="block" />
        </button>
        <button type="button" aria-label={`${label} -`}>
          <Caret className="block" />
        </button>
      </span>
    </span>
  );
}

function Combo({ label, value, className, disabled }: { label: string; value: string; className: string; disabled?: boolean }) {
  return (
    <span
      className={clsx(
        "relative flex h-[19px] shrink-0 items-center rounded-[3px] border border-[#b9b9b9]",
        disabled ? "bg-[#f6f6f6] text-[#888]" : "bg-white",
        className,
      )}
    >
      <select aria-label={label} disabled={disabled} className="h-full w-full appearance-none bg-transparent pl-[3px] outline-none">
        <option>{value}</option>
      </select>
      <span className={clsx("pointer-events-none absolute inset-y-0 right-0 flex w-[18px] items-center justify-center", !disabled && "border-l border-[#ccc]")}>
        <Caret />
      </span>
    </span>
  );
}

function DarkToggle({ text, className }: { text: string; className: string }) {
  return (
    <button
      type="button"
      className={clsx("flex h-[19px] shrink-0 items-center gap-[6px] bg-linear-to-r from-[#4a4a4a] to-[#9b9b9b] pl-[2px] text-[#ddd]", className)}
    >
      <span className="size-[10px] shrink-0 rounded-full border-[3px] border-black bg-[#ddd]" />
      {text}
    </button>
  );
}

function CheckBox({ id, checked, onChange }: { id: string; checked: boolean; onChange: () => void }) {
  return (
    <span className="relative flex size-[13px] shrink-0">
      <input id={id} type="checkbox" checked={checked} onChange={onChange} className="size-[13px] appearance-none border border-[#bbb] bg-white" />
      {checked && (
        <svg viewBox="0 0 13 13" className="pointer-events-none absolute inset-0" aria-hidden="true">
          <path d="M3 6.500l2.500 3.500L10 2.500" fill="none" stroke="#111" strokeWidth="1.800" />
        </svg>
      )}
    </span>
  );
}

function DockTitle({ title }: { title: string }) {
  return (
    <div className="flex h-[18px] items-center gap-[2px] pr-[7px] pl-1">
      <h2 className="flex-1">{title}</h2>
      <button type="button" aria-label={`${title} 분리`} className="size-[11px] rounded-[2px] border border-[#777]">
        <svg viewBox="0 0 9 9" aria-hidden="true">
          <path d="M3.500 1.500h4v4h-4zM1.500 3.500h4v4h-4z" fill="#eee" stroke="#666" strokeWidth=".9" />
        </svg>
      </button>
      <button type="button" aria-label={`${title} 닫기`} className="size-[11px] rounded-[2px] border border-[#777]">
        <svg viewBox="0 0 9 9" aria-hidden="true">
          <path d="M1.500 1.500l6 6M7.500 1.500l-6 6" stroke="#444" strokeWidth="1.500" />
        </svg>
      </button>
    </div>
  );
}

function DockTools({ items }: { items: string[] }) {
  return (
    <div className="flex h-6 items-center gap-[9px] pl-[7px]">
      {items.map((item, index) =>
        item === "V" ? (
          <Caret key={index} className="-ml-[3px] text-[#a5a5a5]" />
        ) : (
          <button key={item} type="button" aria-label={item}>
            <Icon name={item} className="size-[14px]" />
          </button>
        ),
      )}
    </div>
  );
}

const menus = [
  ["프로젝트", "J"], ["편집", "E"], ["보기", "V"], ["레이어", "L"], ["설정", "S"], ["플러그인", "P"], ["벡터", "O"],
  ["래스터", "R"], ["데이터베이스", "D"], ["웹", "W"], ["SCP", ""], ["공간 처리", "C"], ["도움말", "H"],
];

const files = [
  "a0201222_polygon.shp", "b0010000_polygon.shp", "b0020000_line.shp", "c0050000_line.shp", "c0060000_line.shp",
  "c0070000_line.shp", "c0285311_point.shp", "c0380000_point.shp", "c0390000_line.shp", "c0390000_polygon.shp",
  "c0423365_polygon.shp", "c0430000_polygon.shp", "c0520000_line.shp", "d0010000_polygon.shp", "d0020000_polygon.shp",
  "d0030000_point.shp",
];

const sideTools = [
  ["addVector", false], ["addRaster", false], ["addCsv", false], ["addSpatialite", false], ["addVirtual", false],
  ["addPostgis", true], ["addWms", true], ["addWcs", false], ["addWfs", true], ["addGps", true],
] as const;

/* ---------- map data ---------- */

const buffers = [[1157, 368.7], [1259.5, 567], [1173, 687], [1337.3, 754.7], [1138.9, 892.5]];

function bufferPoints(cx: number, cy: number) {
  return Array.from({ length: 20 }, (_, i) => {
    const angle = (i * Math.PI) / 10;
    return `${(cx + 113.5 * Math.sin(angle)).toFixed(1)},${(cy - 113.8 * Math.cos(angle)).toFixed(1)}`;
  }).join(" ");
}

const apartmentsNorth = [
  "460,181 509,182 509,205 460,203",
  "98,230 206,214 208,221 223,226 235,297 219,301 208,238 112,249 98,243",
  "91,268 109,264 117,317 122,322 192,309 188,328 124,339 115,328 97,323",
  "210,325 229,328 239,380 224,386 220,400 165,410 157,391 215,383 220,378",
  "371,464 378,458 446,459 446,478 381,478",
  "342,494 353,486 371,503 446,503 446,521 367,519",
  "648,451 664,451 665,490 652,491",
  "939,108 1005,102 1007,77 1025,78 1026,110 1007,113 1006,122 940,128",
  "908,143 928,142 932,209 912,211",
  "942,212 1020,206 1025,200 1022,155 1041,153 1046,203 1035,205 1030,220 944,230",
  "1060,109 1078,110 1079,127 1096,130 1113,129 1115,151 1082,152 1079,144 1058,142",
  "1185,46 1204,46 1205,58 1227,70 1217,88 1203,102 1190,86 1170,76 1187,60",
  "1172,128 1184,122 1202,130 1217,121 1229,132 1216,147 1204,161 1190,146",
  "1281,57 1300,70 1285,91 1310,117 1280,161 1263,150 1283,121 1260,91",
  "914,235 934,233 938,300 919,302",
  "949,311 1026,306 1034,300 1029,254 1048,253 1052,302 1038,308 1034,320 951,329",
  "1072,232 1172,226 1175,245 1074,252",
  "1174,257 1194,256 1198,322 1182,328 1181,341 1079,350 1078,332 1180,324",
  "1202,334 1234,336 1236,340 1270,342 1269,361 1237,360 1232,354 1201,353",
  "921,342 941,340 944,408 925,410",
  "956,409 1032,404 1040,398 1036,353 1055,352 1058,400 1044,406 1040,419 957,428",
  "1184,367 1203,366 1207,433 1192,437 1187,444 1087,455 1084,435 1186,428",
  "1215,441 1317,434 1319,454 1217,462",
  "927,432 946,431 950,498 931,500",
  "961,511 1040,506 1045,500 1042,455 1061,453 1065,500 1048,507 1045,520 963,530",
  "930,541 949,539 955,608 935,610",
  "1085,533 1186,527 1187,546 1087,553",
  "1216,541 1318,535 1319,554 1217,561",
  "1362,506 1376,521 1364,530 1367,614 1345,615 1345,536",
  "921,653 1036,657 1041,650 1037,600 1048,584 1058,595 1054,650 1078,652 1077,671 1036,667 1034,676 920,671",
  "1109,647 1190,650 1195,640 1187,556 1207,561 1211,643 1198,660 1109,665",
  "1222,644 1325,639 1327,658 1224,665",
  "1356,637 1426,632 1427,652 1357,657",
  "995,740 1060,736 1126,727 1129,747 1062,752 997,761",
  "1152,748 1195,746 1202,740 1199,694 1218,695 1219,742 1208,750 1202,764 1153,767",
  "1231,741 1330,738 1334,730 1330,678 1348,677 1352,743 1335,746 1332,756 1233,763",
];

const apartmentsEast = [
  "743,122 766,121 764,140 776,145 774,161 734,162 736,145 748,140",
  "795,140 835,140 835,160 795,160",
  "776,170 796,169 795,207 844,211 843,230 725,230 725,210 774,209",
  "705,290 765,320 788,277 803,286 781,329 790,335 783,348 698,305",
  "799,341 850,364 860,372 860,390 848,382 793,354",
  "659,354 748,405 740,419 651,369",
  "596,400 655,432 654,440 709,470 706,486 646,452 645,443 588,413",
  "731,439 746,449 729,477 713,469",
  "757,422 822,452 812,468 751,436",
  "824,446 848,458 860,451 858,470 848,475 818,461",
  "565,493 606,508 603,526 558,514",
  "604,525 675,548 668,567 600,543",
  "696,552 762,574 758,596 691,573",
  "770,561 816,576 808,596 763,583",
  "541,646 632,675 663,595 679,602 650,680 637,682 630,697 534,664",
  "665,688 764,720 803,628 819,633 786,728 772,728 766,743 658,705",
  "303,422 337,427 334,448 299,441",
  "369,429 420,434 433,442 456,444 453,465 415,456 390,452 367,446",
  "335,471 353,474 340,581 319,578",
  "449,488 470,491 456,597 439,594 445,545",
  "280,599 323,601 320,622 278,616",
  "345,608 429,618 427,637 342,626",
  "441,623 484,626 481,645 438,639",
];

const apartmentsSouth = [
  "205,635 224,627 231,643 250,634 254,626 286,614 296,631 220,674",
  "677,480 782,482 782,499 676,498",
  "596,566 770,571 769,589 595,583",
  "585,655 758,660 757,677 584,673",
  "607,744 746,749 746,766 606,763",
  "901,548 982,496 991,513 908,566",
  "1023,489 1052,469 1063,485 1033,504",
  "1001,529 1016,520 1047,572 1031,582",
  "1057,581 1120,543 1128,559 1066,600",
  "966,649 1044,594 1050,609 975,666",
  "918,609 932,601 950,632 934,642",
  "884,676 898,666 911,691 951,669 961,685 917,711 900,702",
  "1518,738 1518,795 1498,795 1500,775",
];

function MapCanvas() {
  return (
    <svg viewBox="561 236 1356 789" preserveAspectRatio="xMidYMid slice" className="h-full w-full" role="img" aria-label="지도">
      <g fill="#e8708f" stroke="#4d2f3b" strokeWidth="1">
        {buffers.map(([cx, cy]) => (
          <polygon key={cx} points={bufferPoints(cx, cy)} />
        ))}
      </g>
      <g fill="#dcff00" stroke="#4a5a14" strokeWidth="3">
        {[
          { x: 1030, y: 410, shapes: apartmentsNorth },
          { x: 1220, y: 660, shapes: apartmentsEast },
          { x: 1000, y: 760, shapes: apartmentsSouth },
        ].map(({ x, y, shapes }) => (
          <svg key={x} x={x} y={y} width="600" height="300" viewBox="0 0 1800 900" overflow="visible">
            {shapes.map((points) => (
              <polygon key={points} points={points} />
            ))}
          </svg>
        ))}
      </g>
      <g fill="#80609a" stroke="#3c2a4c" strokeWidth="1">
        {buffers.map(([cx, cy]) => (
          <circle key={cx} cx={cx} cy={cy} r="3.600" />
        ))}
      </g>
    </svg>
  );
}

function BrowserPanel() {
  return (
    <section className="flex h-[333px] shrink-0 flex-col">
      <DockTitle title="탐색기" />
      <div className="h-[28px] shrink-0">
        <DockTools items={["addSelected", "refresh", "filter", "collapse", "info"]} />
      </div>
      <div className="mr-[6px] flex min-h-0 flex-1 flex-col border border-[#b5b5b5] bg-white">
        <div className="flex min-h-0 flex-1">
          <div className="min-w-0 flex-1 overflow-hidden text-[11px]">
            <ul className="flex h-[267px] flex-col">
              {files.map((file) => {
                const current = file === "c0380000_point.shp";
                return (
                  <li key={file} className={clsx("flex flex-1 items-center gap-[5px] pl-[76px]", current && "bg-[#f0f0f1]")}>
                    <Icon name={current ? "polygonFileOn" : "polygonFile"} className="size-[16px]" />
                    {file}
                  </li>
                );
              })}
            </ul>
            <p className="flex items-center gap-[5px] pl-[76px]">
              <Icon name="polygonFile" className="size-[16px]" />
              e0010001_polygon.shp
            </p>
          </div>
          <div className="flex w-[14px] flex-col border-l border-[#c4c4c4] bg-[#e6e6e7]">
            <span className="flex h-[13px] rotate-180 items-center justify-center border-t border-[#c4c4c4] bg-[#f7f7f7]"><Caret /></span>
            <span className="mt-[33px] h-[31px] border-y border-[#c4c4c4] bg-white" />
            <span className="mt-auto flex h-[13px] items-center justify-center border-t border-[#c4c4c4] bg-[#f7f7f7]"><Caret /></span>
          </div>
        </div>
        <div className="flex h-[13px] border-t border-[#c4c4c4] bg-[#e6e6e7]">
          <span className="flex w-[13px] items-center justify-center border-r border-[#c4c4c4] bg-[#f7f7f7]"><Caret className="rotate-90" /></span>
          <span className="w-[262px] border-r border-[#c4c4c4] bg-[#fcfcfc]" />
          <span className="mr-[14px] ml-auto flex w-[13px] items-center justify-center border-x border-[#c4c4c4] bg-[#f7f7f7]"><Caret className="-rotate-90" /></span>
        </div>
      </div>
    </section>
  );
}

function LayersPanel() {
  const [visible, setVisible] = useState<Record<string, boolean>>({ point: true, apartment: true, buffer: true });
  const toggle = (id: string) => setVisible((prev) => ({ ...prev, [id]: !prev[id] }));

  const layers = [
    { id: "point", name: "c0380000_point", symbol: <span className="mx-[4px] size-[7px] rounded-full bg-[#7a5f90]" />, style: "underline font-medium" },
    { id: "apartment", name: "apartment", symbol: <span className="size-[15px] border border-[#8a9c20] bg-[#dcff00]" />, style: "font-medium" },
    { id: "buffer", name: "버퍼를 적용한 산출물", symbol: <span className="size-[15px] border border-[#a5566c] bg-[#e8708f]" />, style: "font-bold" },
    { id: "satellite", name: "Google Satellite", symbol: <Icon name="rasterLayer" className="size-[15px]" />, style: "italic text-[#b5b5b5]" },
  ];

  return (
    <section className="flex min-h-0 flex-1 flex-col">
      <div className="mx-auto mt-[2px] h-[2px] w-4 border-t border-dotted border-[#aaa]" />
      <div className="pt-[1px]"><DockTitle title="레이어" /></div>
      <div className="flex h-[29px] items-center">
        <DockTools items={["brush", "addGroup", "eye", "filter", "epsilon", "V", "expand", "collapse", "removeLayer"]} />
      </div>
      <ul className="mr-[6px] min-h-0 flex-1 border border-[#b5b5b5] bg-white text-[11px]">
        {layers.map((layer) => (
          <li key={layer.id} className="flex h-[17px] items-center">
            <span className="flex w-[21px] justify-center pr-1">{layer.id === "satellite" && <Caret />}</span>
            <CheckBox id={layer.id} checked={!!visible[layer.id]} onChange={() => toggle(layer.id)} />
            <span className="mx-[6px] flex w-[15px] shrink-0 items-center">{layer.symbol}</span>
            <label htmlFor={layer.id} className={layer.style}>{layer.name}</label>
          </li>
        ))}
      </ul>
    </section>
  );
}

function StatusBar() {
  const [rendering, setRendering] = useState(true);
  return (
    <footer className="flex h-[27px] shrink-0 items-center border-t border-[#c9c9c9] bg-[#f0eff0] pl-1">
      <label className="flex h-[21px] w-[331px] items-center gap-[8px] rounded-[2px] border border-[#b9b9b9] bg-white pl-[7px]">
        <Icon name="magnify" className="size-[12px]" />
        <input aria-label="위치 검색" placeholder="위치를 찾으려면 입력하세요 (Ctrl+K)" className="min-w-0 flex-1 text-[11px] italic outline-none placeholder:text-[#b5b5b5]" />
      </label>
      <p className="ml-[9px] flex-1 text-[11px]">1개의 범례 항목 제거됨.</p>
      <label htmlFor="coords" className="w-[22px] shrink-0 text-[11px]">좌표</label>
      <input id="coords" defaultValue="14142592,4535841" className="h-[19px] w-[110px] rounded-[3px] border border-[#b9b9b9] bg-white pl-[2px] outline-none" />
      <button type="button" aria-label="범위" className="mr-[13px] ml-[4px]"><Icon name="extents" className="size-[14px]" /></button>
      <span className="w-[23px] text-[11px]">축척</span>
      <Combo label="축척" value="1:7801" className="w-[83px]" />
      <span className="mx-[9px]"><Icon name="lock" className="size-[14px]" /></span>
      <span className="w-[32px] text-[11px]">확대경</span>
      <SpinBox label="확대경" value="100%" className="w-[82px]" />
      <span className="ml-[9px] w-[38px] text-[11px]">기울기</span>
      <SpinBox label="기울기" value="0.0 °" className="w-[79px]" />
      <span className="ml-[5px] flex items-center gap-[5px]">
        <CheckBox id="render" checked={rendering} onChange={() => setRendering(!rendering)} />
        <label htmlFor="render" className="text-[11px]">렌더링</label>
      </span>
      <button type="button" className="ml-[16px] flex w-[80px] items-center gap-[4px] text-[11px]">
        <Icon name="crs" className="size-[14px]" />
        EPSG:3857
      </button>
      <button type="button" aria-label="메시지" className="mr-[6px] ml-[14px]"><Icon name="messages" className="size-[16px]" /></button>
    </footer>
  );
}

export default function App() {
  return (
    <div className="flex h-screen flex-col bg-black pt-[88px] font-['Open_Sans','Noto_Sans_CJK_KR',sans-serif] text-[12px] leading-4 text-[#333]">
      <div className="mr-[131px] ml-[136px] flex min-h-0 flex-1 flex-col bg-[#f0eff0]">
        <header className="flex h-[21px] shrink-0 items-center bg-white pb-[2px] pl-[2px]">
          <Icon name="qgis" className="size-[15px]" />
          <h1 className="ml-[4px] flex-1 text-[11px]">*Untitled Project - QGIS</h1>
          <button type="button" aria-label="최소화" className="flex w-[42px] justify-center">
            <svg viewBox="0 0 12 12" className="size-3" aria-hidden="true"><path d="M1.500 5.500h9" stroke="#222" strokeWidth="1.200" /></svg>
          </button>
          <button type="button" aria-label="이전 크기로" className="flex w-[42px] justify-center">
            <svg viewBox="0 0 12 12" className="size-3" aria-hidden="true"><path d="M1.500 3.500h7v7h-7zM3.500 3.500v-2h7v7h-2" fill="none" stroke="#222" strokeWidth="1.200" /></svg>
          </button>
          <button type="button" aria-label="닫기" className="mr-[3px] flex w-[42px] justify-center">
            <svg viewBox="0 0 12 12" className="size-3" aria-hidden="true"><path d="M1.500 1.500l9 9M10.500 1.500l-9 9" stroke="#222" strokeWidth="1.200" /></svg>
          </button>
        </header>

        <nav className="flex h-[18px] shrink-0 items-center gap-[14px] pl-[9px] text-[11px]">
          {menus.map(([name, key]) => (
            <button key={name} type="button" className="whitespace-nowrap">
              {name}
              {key && <> (<u>{key}</u>)</>}
            </button>
          ))}
        </nav>

        <div className="flex h-[36px] shrink-0 items-center border-b border-[#c4c4c6] bg-linear-to-b from-[#fafafa] to-[#f0eff0] pr-1">
          <span className="-mr-[3px]"><Grip /></span>
          <ToolGroup className="w-[214px]" items="newFile open save saveAs newLayout layouts styles" />
          <Grip />
          <ToolGroup className="w-[428px]" items="hand panSelection zoomIn zoomOut zoomNative zoomFull zoomSelection zoomLayer zoomLast zoomNext bookNew bookmarkNew bookmark refresh" />
          <Grip />
          <ToolGroup className="w-[309px]" items="identify gearGrey V select v selectForm v deselect table abacus gear sigma" />
          <div className="flex h-[29px] w-[41px] shrink-0 rounded-[2px] border border-[#aaa] bg-[#d9d9d9]">
            <button type="button" aria-label="measure" className="flex flex-1 items-center justify-center border-r border-[#aaa]"><Icon name="measure" /></button>
            <button type="button" aria-label="메뉴" className="flex w-[10px] items-center justify-center"><Caret /></button>
          </div>
          <ToolGroup className="w-[73px]" items="mapTip textNote v" />
          <Grip />
          <ToolGroup className="w-[91px]" items="magnet snapV snapPoints" />
          <SpinBox label="허용 오차" value="12" className="w-[83px]" disabled />
          <Combo label="단위" value="px" className="ml-[2px] w-[47px]" disabled />
          <ToolGroup className="w-[104px]" items="topo cross trace V" />
          <span className="ml-[2px] flex"><Grip /><Grip /></span>
          <ToolGroup className="w-[31px]" items="shapeDigit" />
        </div>

        <div className="flex h-[36px] shrink-0 items-center border-b border-[#c4c4c6] bg-linear-to-b from-[#fafafa] to-[#f0eff0] pr-1">
          <span className="-mr-[3px]"><Grip /></span>
          <ToolGroup className="w-[153px]" items="dataSource newGeopackage newShape newSpatialite newMemory" />
          <Grip />
          <ToolGroup className="w-[378px]" items="editsGrey pencil saveGrey addPoint vertexTool V editForm trash cut copy paste undo redo" />
          <Grip />
          <ToolGroup className="w-[245px]" items="label diagram labelPin labelGrey1 labelGrey2 labelGrey3 labelGrey4 labelGrey5" />
          <Grip />
          <ToolGroup className="w-[31px]" items="database" />
          <Grip />
          <ToolGroup className="w-[61px]" items="grass osm" />
          <Grip />
          <ToolGroup className="w-[61px]" items="python earth" />
          <Grip />
          <ToolGroup className="w-[31px]" items="help" />
          <Grip />
          <Grip />
          <ToolGroup className="w-[31px]" items="stack" />
          <Grip />
          <ToolGroup className="w-[208px]" items="curve V circleDraw V ellipseDraw V rectDraw V polyDraw V" />
          <Grip />
          <ToolGroup className="w-[245px]" items="hist1 hist2 hist3 hist2 sunUp sunDown contrastUp contrastDown" />
          <Grip />
          <ToolGroup className="w-[134px]" items="setSquare moveFeature V rotateFeature simplify" />
          <button type="button" aria-label="더 보기" className="ml-auto pb-[2px] text-[14px] font-bold text-[#111]">»</button>
        </div>

        <div className="flex h-[37px] shrink-0 items-center border-b-2 border-[#c4c4c6] bg-linear-to-b from-[#fafafa] to-[#f0eff0] pr-1">
          <span className="-mr-[3px]"><Grip /></span>
          <ToolGroup className="w-[61px]" items="bandset zoomImage" />
          <DarkToggle text="RGB =" className="w-[59px]" />
          <Combo label="RGB" value="-" className="ml-[1px] w-[73px]" />
          <ToolGroup className="w-[93px]" items="stretchPct stretchSigma zoomRoi" />
          <DarkToggle text="ROI" className="w-[54px]" />
          <ToolGroup className="w-[93px]" items="roiPolygon roiAdd redoRoi" />
          <span className="ml-[3px] w-[22px]">Dist</span>
          <SpinBox label="Dist" value="0.010000" className="w-[92px]" />
          <span className="ml-[4px] w-[22px]">Min</span>
          <SpinBox label="Min" value="60" className="w-[55px]" />
          <span className="ml-[3px] w-[26px]">Max</span>
          <SpinBox label="Max" value="100" className="w-[55px]" />
          <ToolGroup className="w-[31px]" items="zoomPreview" />
          <DarkToggle text="Preview" className="w-[67px]" />
          <ToolGroup className="w-[61px]" items="previewAdd redoRoi" />
          <span className="ml-[3px] w-[8px]">T</span>
          <SpinBox label="T" value="0" className="w-[46px]" />
          <span className="ml-[3px] w-[7px]">S</span>
          <SpinBox label="S" value="200" className="w-[56px]" />
          <ToolGroup className="w-[61px]" items="bin kml" />
          <Grip />
          <ToolGroup className="w-[31px]" items="classify" />
          <SpinBox label="밴드 0" value="0" className="w-[55px]" />
          <ToolGroup className="w-[32px]" items="runBox" />
          <SpinBox label="밴드 1" value="1" className="w-[55px]" />
          <ToolGroup className="w-[32px]" items="runBox" />
          <SpinBox label="밴드 2" value="2" className="w-[55px]" />
          <ToolGroup className="w-[62px]" items="runBox classGrey" />
          <Grip />
          <ToolGroup className="w-[31px]" items="mosaic" />
          <button type="button" aria-label="mosaicStack" className="flex h-[29px] w-[29px] shrink-0 items-center justify-center rounded-[2px] border border-[#b5b5b5] bg-white">
            <Icon name="mosaicStack" />
          </button>
        </div>

        <main className="flex min-h-0 flex-1">
          <aside className="flex w-[48px] shrink-0 flex-col items-start border-r border-[#c9c9c9] bg-linear-to-r from-[#fafafa] to-[#ececee] pt-[5px]">
            <span className="ml-[17px] h-[6px] w-4 bg-[radial-gradient(#bdbdbd_1px,transparent_1px)] bg-[size:3px_3px]" />
            <div className="flex h-[296px] flex-col pl-[7px]">
              {sideTools.map(([name, menu]) => (
                <div key={name} className="flex flex-1 items-center gap-[6px]">
                  <button type="button" aria-label={name}><Icon name={name} /></button>
                  {menu && <Caret />}
                </div>
              ))}
            </div>
          </aside>
          <div className="flex w-[376px] shrink-0 flex-col">
            <BrowserPanel />
            <LayersPanel />
          </div>
          <div className="min-w-0 flex-1 overflow-hidden border-l border-[#b5b5b5] bg-white">
            <MapCanvas />
          </div>
        </main>

        <StatusBar />
      </div>
      <p className="flex h-[100px] shrink-0 justify-end pt-[35px] pr-[156px] text-[24px] leading-6 font-light text-[#a5a5a5]">29</p>
    </div>
  );
}
